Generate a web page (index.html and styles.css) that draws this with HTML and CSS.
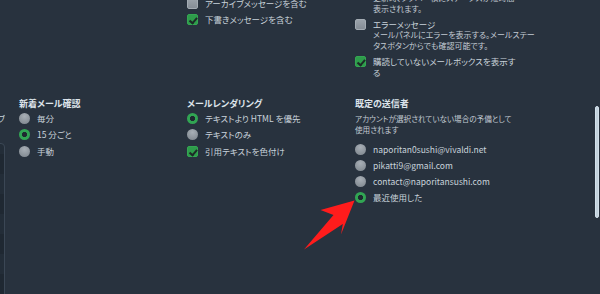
FILE: index.html
```html
<!DOCTYPE html>
<html lang="ja">
<head>
    <meta charset="UTF-8">
    <meta name="viewport" content="width=device-width, initial-scale=1.0">
    <title>メール設定</title>
    <link rel="stylesheet" href="styles.css">
</head>
<body>
    <div class="prefs">
        <div class="row row-top">
            <div class="col stub"></div>
            <div class="col"></div>

            <div class="col col-mid">
                <div class="options">
                    <label class="item"><span class="box"></span><span class="text">アーカイブメッセージを含む</span></label>
                    <label class="item"><span class="box checked"></span><span class="text">下書きメッセージを含む</span></label>
                </div>
            </div>

            <div class="col col-right">
                <p class="desc indent">更新時、タブバー横にステータスが短時間<br>表示されます。</p>
                <div class="options">
                    <label class="item">
                        <span class="box"></span>
                        <span class="text"><span class="label">エラーメッセージ</span><span class="desc">メールパネルにエラーを表示する。メールステー<br>タスボタンからでも確認可能です。</span></span>
                    </label>
                    <label class="item">
                        <span class="box checked"></span>
                        <span class="text">購読していないメールボックスを表示す<br>る</span>
                    </label>
                </div>
            </div>
        </div>

        <div class="row row-bottom">
            <div class="col stub">
                <span class="stub-label">通知のタブ</span>
                <div class="stub-panel"></div>
            </div>

            <div class="col">
                <h3>新着メール確認</h3>
                <div class="options">
                    <label class="item"><span class="radio"></span><span class="text">毎分</span></label>
                    <label class="item"><span class="radio selected"></span><span class="text">15 分ごと</span></label>
                    <label class="item"><span class="radio"></span><span class="text">手動</span></label>
                </div>
            </div>

            <div class="col">
                <h3>メールレンダリング</h3>
                <div class="options">
                    <label class="item"><span class="radio selected"></span><span class="text">テキストより HTML を優先</span></label>
                    <label class="item"><span class="radio"></span><span class="text">テキストのみ</span></label>
                    <label class="item"><span class="box checked"></span><span class="text">引用テキストを色付け</span></label>
                </div>
            </div>

            <div class="col">
                <h3>既定の送信者</h3>
                <p class="desc sender-desc">アカウントが選択されていない場合の予備として<br>使用されます</p>
                <div class="options senders">
                    <label class="item"><span class="radio"></span><span class="text">naporitan0sushi@vivaldi.net</span></label>
                    <label class="item"><span class="radio"></span><span class="text">pikatti9@gmail.com</span></label>
                    <label class="item"><span class="radio"></span><span class="text">contact@naporitansushi.com</span></label>
                    <label class="item"><span class="radio selected"></span><span class="text">最近使用した</span></label>
                </div>
            </div>
        </div>
    </div>

    <div class="scroll-thumb"></div>

    <!-- annotation arrow -->
    <svg class="arrow" width="70" height="60" viewBox="296 196 70 60">
        <polygon points="304,249.5 333.5,215 320.5,210 354.5,200.5 341,234.5 342.8,224" fill="#ff1c1c"/>
    </svg>
</body>
</html>
```

FILE: styles.css
```css
* {
    margin: 0;
    padding: 0;
    box-sizing: border-box;
}

html, body {
    height: 100%;
    overflow: hidden;
}

body {
    font-family: "Noto Sans CJK JP", sans-serif;
    font-feature-settings: "palt";
    background: #28323e;
    color: #c9d2db;
    font-size: 8.5px;
    position: relative;
}

.prefs {
    margin-top: -7px;
}

.row {
    display: grid;
    grid-template-columns: 5px 154px 154px 155px;
    column-gap: 14px;
}

.row-bottom {
    margin-top: 19.5px;
}

h3 {
    font-size: 9px;
    line-height: 11px;
    font-weight: bold;
    color: #dde4eb;
    margin-bottom: 4px;
}

.options {
    display: flex;
    flex-direction: column;
    gap: 5.5px;
}

.item {
    display: flex;
    align-items: flex-start;
    gap: 7px;
    line-height: 11px;
    white-space: nowrap;
}

.text, .label {
    display: block;
}

.desc {
    display: block;
    font-size: 8px;
    line-height: 10.5px;
    color: #c2cad3;
    white-space: nowrap;
}

.indent {
    padding-left: 18px;
}

.col-mid {
    padding-top: 4.5px;
}

.col-right .options {
    margin-top: 5px;
    gap: 5px;
}

.sender-desc {
    font-size: 7.6px;
    line-height: 11px;
}

.senders {
    margin-top: 9px;
    gap: 5px;
}

/* controls */
.box, .radio {
    flex: none;
    width: 11px;
    height: 11px;
}

.box {
    border-radius: 2px;
    background: linear-gradient(#9aa2aa, #858d96);
    border: 1px solid #a3abb3;
}

.box.checked {
    background: #2e9c4b;
    border-color: #34a752;
    position: relative;
}

.box.checked::after {
    content: "";
    position: absolute;
    left: 2.5px;
    top: 1px;
    width: 3px;
    height: 5.5px;
    border: solid #1d2a27;
    border-width: 0 2px 2px 0;
    transform: rotate(40deg);
}

.radio {
    border-radius: 50%;
    background: radial-gradient(circle at 50% 30%, #a8afb6, #7b838b);
}

.radio.selected {
    background: radial-gradient(circle, #1e2a30 0 2.4px, #31a553 2.9px);
}

/* cut-off column on the left */
.stub {
    display: flex;
    flex-direction: column;
    align-items: flex-end;
    overflow: hidden;
    padding-top: 15px;
}

.stub-label {
    line-height: 11px;
    white-space: nowrap;
}

.stub-panel {
    flex: none;
    width: 150px;
    height: 200px;
    margin-top: 19.5px;
    border: 1px solid #3b4755;
    border-radius: 4px;
    background: repeating-linear-gradient(#232d38 0 10px, #1f2832 10px 30px, #232d38 30px 40px);
}

/* overlays */
.scroll-thumb {
    position: absolute;
    top: 106px;
    right: 1.5px;
    width: 4px;
    height: 112px;
    border-radius: 2px;
    background: #c3d2dd;
    border: 1px solid #d3e0ea;
}

.arrow {
    position: absolute;
    left: 296px;
    top: 196px;
}
```
